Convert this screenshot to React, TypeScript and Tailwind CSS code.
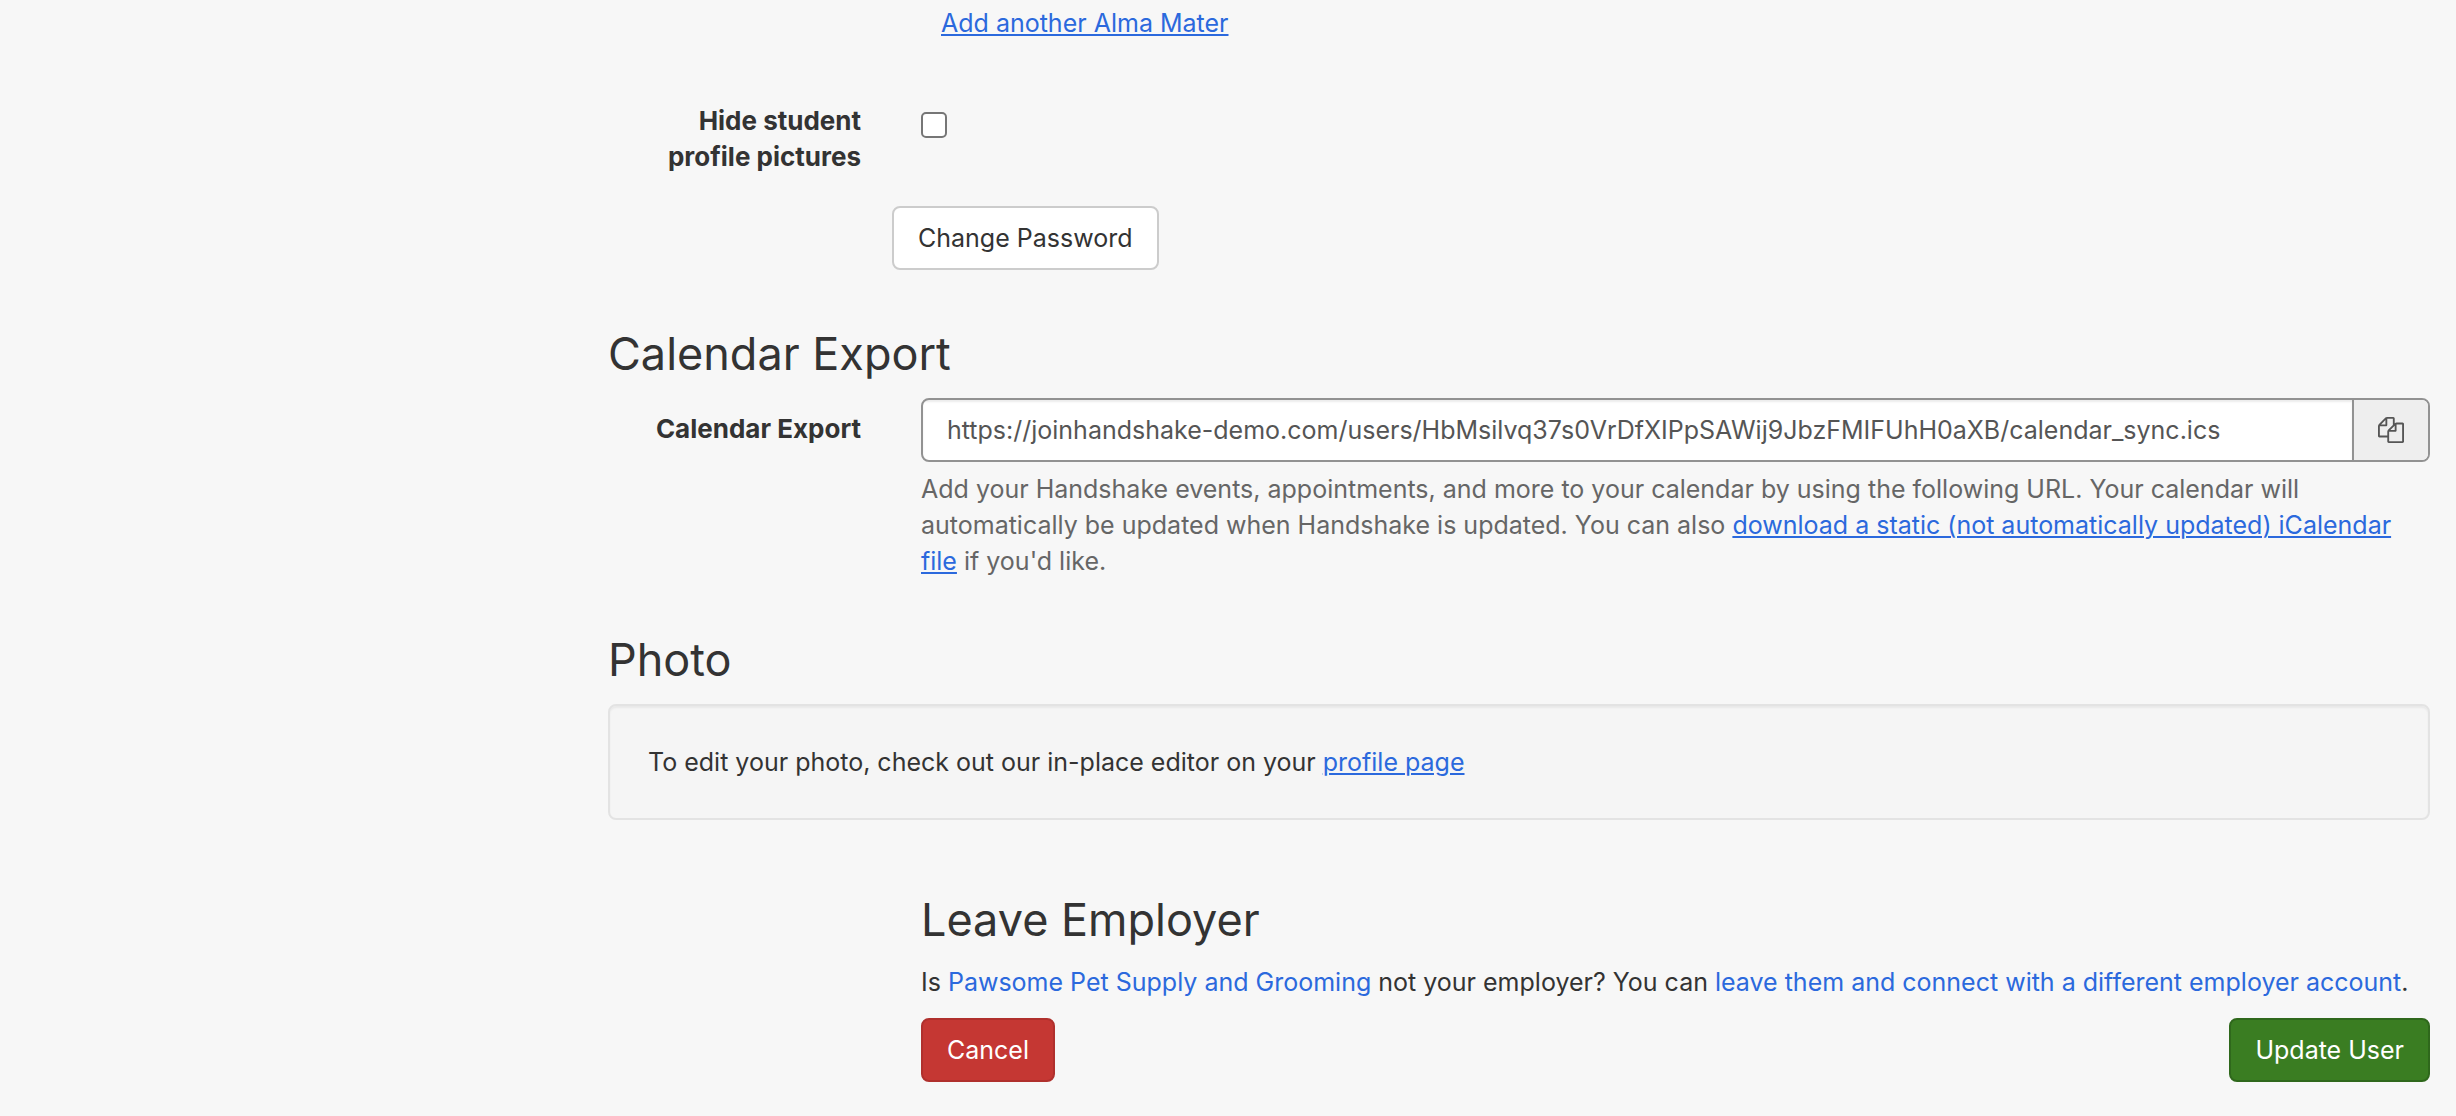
import type { ButtonHTMLAttributes, ReactNode } from "react"
import clsx from "clsx"

const CALENDAR_URL =
    "https://joinhandshake-demo.com/users/HbMsilvq37s0VrDfXIPpSAWij9JbzFMIFUhH0aXB/calendar_sync.ics"

interface FormRowProps {
    label?: ReactNode
    children: ReactNode
    className?: string
}

function FormRow({ label, children, className }: FormRowProps) {
    return (
        <div className={clsx("grid grid-cols-[253px_minmax(0,1fr)] gap-x-[60px]", className)}>
            <div className="text-right text-[26px] leading-9 font-bold">{label}</div>
            <div>{children}</div>
        </div>
    )
}

interface ButtonProps extends ButtonHTMLAttributes<HTMLButtonElement> {
    variant: "default" | "danger" | "success"
}

function Button({ variant, children, ...props }: ButtonProps) {
    return (
        <button
            className={clsx(
                "h-16 rounded-lg border-2 px-6",
                variant === "default" && "border-[#cccccc] bg-white text-[#333333]",
                variant === "danger" && "border-[#b0302d] bg-[#c53733] text-white",
                variant === "success" && "border-[#2f681c] bg-[#3a7d22] text-white"
            )}
            {...props}
        >
            {children}
        </button>
    )
}

function TextLink({ underline = true, children }: { underline?: boolean; children: ReactNode }) {
    return (
        <a
            href="#"
            className={clsx("text-[#2b69dd]", underline && "underline decoration-2 underline-offset-2")}
        >
            {children}
        </a>
    )
}

function SectionHeading({ children }: { children: ReactNode }) {
    return <h2 className="text-[45px] leading-[52px] text-[#333333]">{children}</h2>
}

function FilesIcon() {
    return (
        <svg viewBox="0 0 1792 1792" className="size-[26px]" fill="currentColor" aria-hidden="true">
            <path d="M1696 384q40 0 68 28t28 68v1216q0 40-28 68t-68 28h-960q-40 0-68-28t-28-68v-288h-544q-40 0-68-28t-28-68v-672q0-40 20-88t48-76l408-408q28-28 76-48t88-20h416q40 0 68 28t28 68v328q68-40 128-40h416zm-544 213l-299 299h299v-299zm-640-384l-299 299h299v-299zm196 647l316-316v-416h-384v416q0 40-28 68t-68 28h-416v640h512v-256q0-40 20-88t48-76zm956 804v-1152h-384v416q0 40-28 68t-68 28h-416v640h896z" />
        </svg>
    )
}

export default function App() {
    return (
        <div className="min-h-screen bg-[#f7f7f7] font-['Inter','Liberation_Sans',sans-serif] text-[25px] leading-9 text-[#333333]">
            <main className="pt-[5px] pr-[26px] pb-8 pl-[608px]">
                {/* Account settings */}
                <FormRow>
                    <div className="pl-5">
                        <TextLink>Add another Alma Mater</TextLink>
                    </div>
                </FormRow>

                <FormRow
                    className="mt-[62px]"
                    label={
                        <label htmlFor="hide-pictures">
                            Hide student
                            <br />
                            profile pictures
                        </label>
                    }
                >
                    <input
                        id="hide-pictures"
                        type="checkbox"
                        className="mt-[9px] block size-[26px] appearance-none rounded-[5px] border-2 border-[#767676] bg-white"
                    />
                </FormRow>

                <div className="mt-[31px] pl-[284px]">
                    <Button variant="default" type="button">Change Password</Button>
                </div>

                {/* Calendar export */}
                <section className="mt-[58px]">
                    <SectionHeading>Calendar Export</SectionHeading>
                    <FormRow
                        className="mt-[18px]"
                        label={<label htmlFor="calendar-url" className="block pt-[13px]">Calendar Export</label>}
                    >
                        <div className="flex h-16 overflow-hidden rounded-lg border-2 border-[#929292] bg-white">
                            <input
                                id="calendar-url"
                                type="text"
                                readOnly
                                defaultValue={CALENDAR_URL}
                                className="min-w-0 flex-1 px-6 text-[#555555] shadow-[inset_0_2px_2px_rgba(0,0,0,0.075)] outline-none"
                            />
                            <button
                                type="button"
                                aria-label="Copy calendar URL"
                                className="flex w-[76px] items-center justify-center border-l-2 border-[#929292] bg-[#eeeeee] text-[#555555]"
                            >
                                <FilesIcon />
                            </button>
                        </div>
                        <p className="mt-[9px] text-[#666666]">
                            Add your Handshake events, appointments, and more to your calendar by using the following
                            URL. Your calendar will automatically be updated when Handshake is updated. You can also{" "}
                            <TextLink>download a static (not automatically updated) iCalendar file</TextLink> if you'd like.
                        </p>
                    </FormRow>
                </section>

                {/* Photo */}
                <section className="mt-[55px]">
                    <SectionHeading>Photo</SectionHeading>
                    <div className="mt-[18px] rounded-lg border-2 border-[#e3e3e3] bg-[#f5f5f5] p-[38px] shadow-[inset_0_2px_2px_rgba(0,0,0,0.05)]">
                        To edit your photo, check out our in-place editor on your <TextLink>profile page</TextLink>
                    </div>
                </section>

                {/* Leave employer */}
                <FormRow className="mt-[74px]">
                    <SectionHeading>Leave Employer</SectionHeading>
                    <p className="mt-[18px]">
                        Is <TextLink underline={false}>Pawsome Pet Supply and Grooming</TextLink> not your employer? You can{" "}
                        <TextLink underline={false}>leave them and connect with a different employer account</TextLink>.
                    </p>
                    <div className="mt-[18px] flex justify-between">
                        <Button variant="danger" type="button">Cancel</Button>
                        <Button variant="success" type="submit">Update User</Button>
                    </div>
                </FormRow>
            </main>
        </div>
    )
}
